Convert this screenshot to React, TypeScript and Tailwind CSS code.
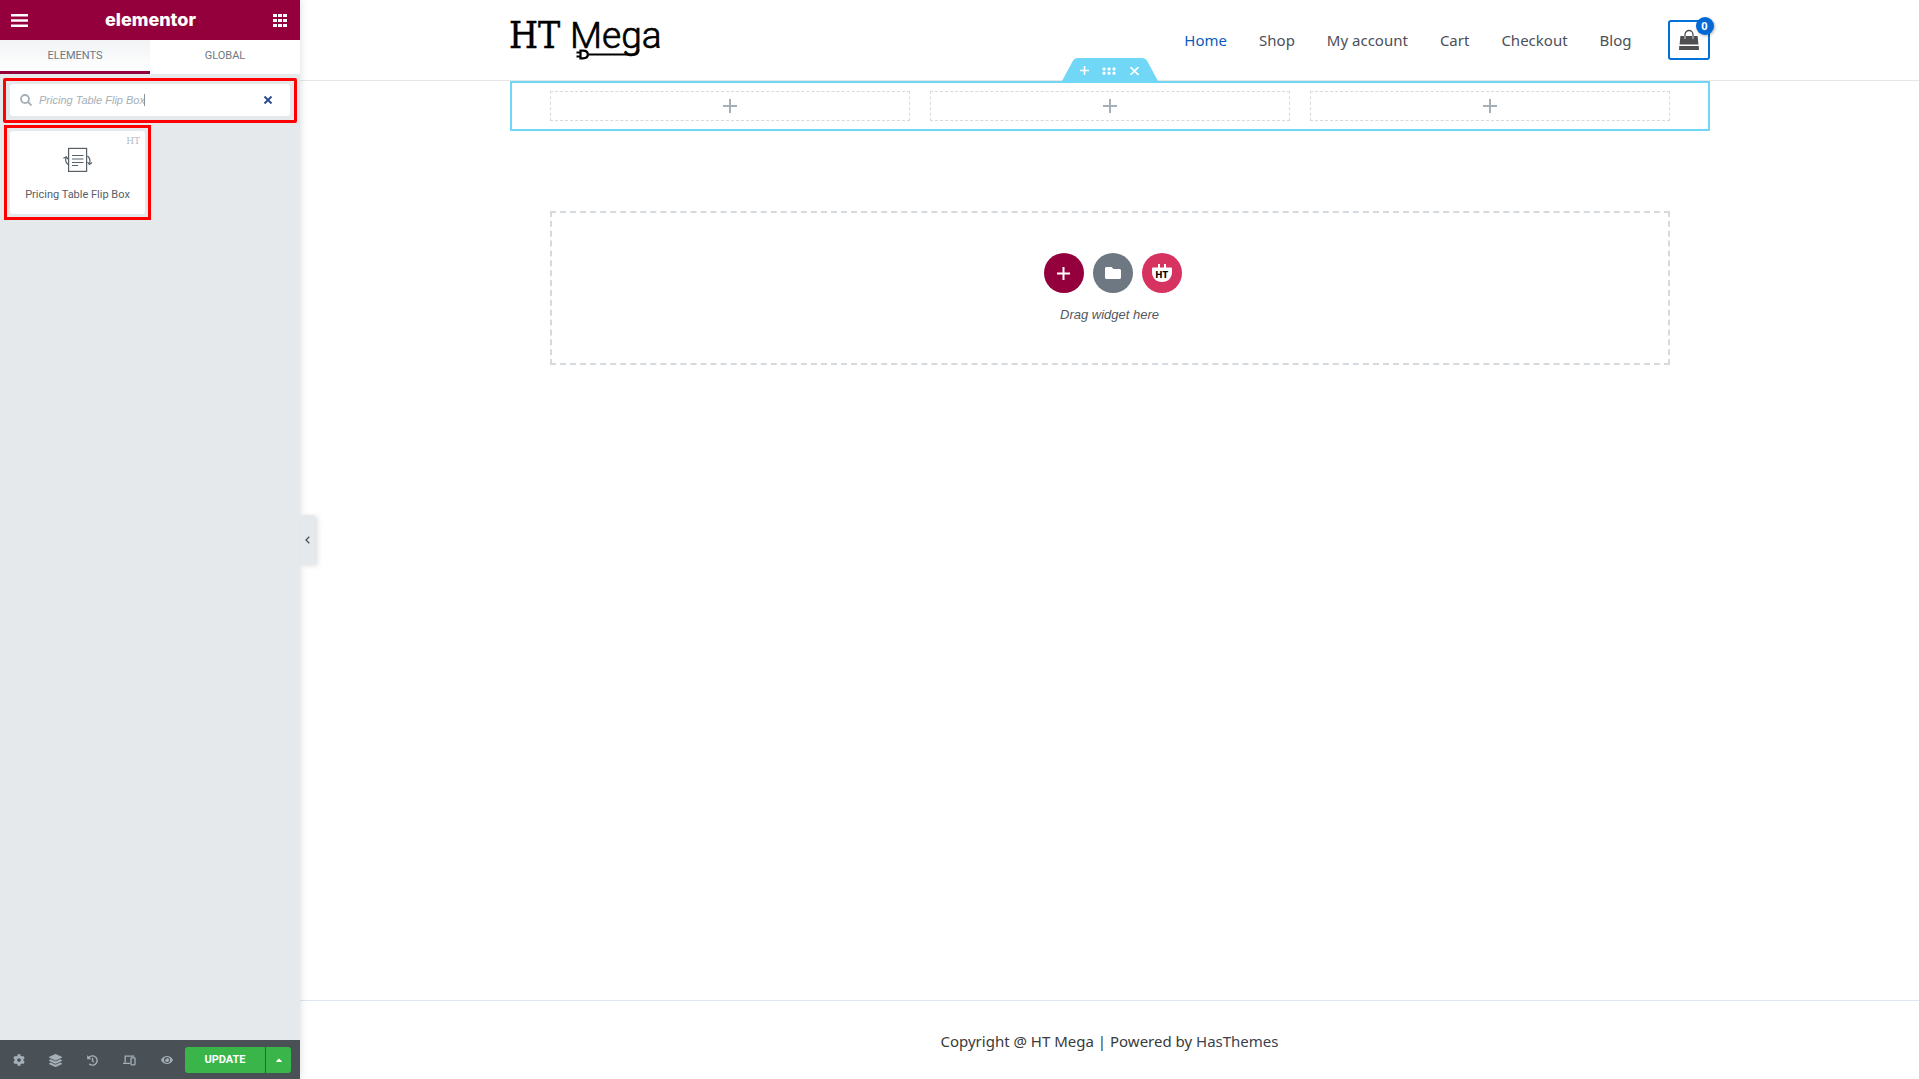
import { useState } from 'react'
import { FaCog, FaLayerGroup, FaHistory, FaEye, FaCaretUp, FaFolder } from 'react-icons/fa'

const NAV_ITEMS = ['Home', 'Shop', 'My account', 'Cart', 'Checkout', 'Blog']

const COLUMNS = ['first', 'second', 'third']

const FOOTER_TOOLS = [
  { label: 'Settings', icon: <FaCog size={12} /> },
  { label: 'Navigator', icon: <FaLayerGroup size={13} /> },
  { label: 'History', icon: <FaHistory size={11} /> },
  { label: 'Responsive mode', icon: <DevicesIcon /> },
  { label: 'Preview changes', icon: <FaEye size={12} /> },
]

function DevicesIcon() {
  return (
    <svg width="13" height="11" viewBox="0 0 13 11" fill="none" stroke="currentColor" strokeWidth="1.3">
      <path d="M2.2 7.5V1.2h9.2M0 8.4h7" />
      <rect x="8" y="2.8" width="4" height="7" rx="0.5" />
    </svg>
  )
}

function GridIcon() {
  return (
    <svg width="14" height="13" viewBox="0 0 14 13" fill="currentColor">
      {[0, 5, 10].map(y => [0, 5, 10].map(x => <rect key={`${x}-${y}`} x={x} y={y} width="4" height="3" />))}
    </svg>
  )
}

function PlusIcon({ size, strokeWidth = 2 }: { size: number; strokeWidth?: number }) {
  return (
    <svg width={size} height={size} viewBox={`0 0 ${size} ${size}`} stroke="currentColor" strokeWidth={strokeWidth}>
      <path d={`M${size / 2} 0V${size}M0 ${size / 2}H${size}`} />
    </svg>
  )
}

function FlipBoxIcon() {
  return (
    <svg width="30" height="26" viewBox="-1 0 30 26" fill="none" stroke="currentColor" strokeWidth="1.2">
      <rect x="4.6" y="1.4" width="18" height="23" />
      <path d="M8 8.500h11.500M8 12h11.500M8 15.500h11.500M8 18.500h6" />
      <path d="M4 17.500C1.600 15.500 1.200 12.500 2.200 10M-0.600 11.200L2.300 9.800l1.700 2.400" />
      <path d="M23.400 9c2.400 1.800 3 4.800 2.200 7.500M28 15.500l-2.600 2-1.800-2.400" />
    </svg>
  )
}

function BagIcon() {
  return (
    <svg width="22" height="22" viewBox="0 0 22 22" fill="#4f4f51">
      <path d="M7 9V5.500a4 4 0 0 1 8 0V9" fill="none" stroke="#4f4f51" strokeWidth="1.300" />
      <path d="M2.400 7h17.200l.8 8.500H1.600z" />
      <path d="M7 10V7M15 10V7" stroke="#fff" strokeWidth="0.800" />
      <path d="M1.200 17h19.600l.2 4H1z" />
    </svg>
  )
}

function PlugIcon() {
  return (
    <svg width="22" height="20" viewBox="0 0 22 20">
      <path d="M8 5V1M14 5V1" stroke="#fff" strokeWidth="2" />
      <path d="M2 4.500h18a1 1 0 0 1 1 1V9c0 6-4 10-10 10S1 15 1 9V5.500a1 1 0 0 1 1-1z" fill="#fff" />
      <text x="11" y="15" textAnchor="middle" fontSize="9" className="font-[Inter,sans-serif] font-extrabold">HT</text>
    </svg>
  )
}

function Logo() {
  return (
    <svg width="154" height="58" viewBox="0 -6 154 58" role="img" aria-label="HT Mega" className="overflow-visible">
      <text x="-1" y="31" fontSize="37" stroke="#000" strokeWidth="0.400" className="font-['DejaVu_Serif_Condensed','DejaVu_Serif',serif]">HT</text>
      <text x="60" y="31" fontSize="37" stroke="#000" strokeWidth="0.700" className="font-[Roboto,sans-serif] font-light">Mega</text>
      <path d="M78 37.500h46q4.500 0 4.500-5" fill="none" stroke="#000" strokeWidth="2.200" />
      <path d="M70.500 33.700h2.500c3.300 0 4.800 1.800 4.800 3.800s-1.500 3.800-4.800 3.800h-2.500z" fill="#fff" stroke="#000" strokeWidth="2.200" />
      <path d="M66.500 35.500h4M66.500 39.500h4" stroke="#000" strokeWidth="1.800" />
    </svg>
  )
}

function Panel() {
  const [query, setQuery] = useState('Pricing Table Flip Box')
  const [tab, setTab] = useState('Elements')

  return (
    <aside className="relative z-10 flex w-[300px] shrink-0 flex-col bg-[#e6e9ec] font-[Roboto,sans-serif] shadow-[0_0_8px_rgba(0,0,0,0.15)]">
      <header className="flex h-10 items-center justify-between bg-[#93003c] pr-[13px] pl-[11px] text-white">
        <button type="button" aria-label="Menu">
          <svg width="17" height="13" viewBox="0 0 17 13" fill="currentColor">
            <path d="M0 0h17v2.500H0zM0 5.200h17v2.500H0zM0 10.400h17v2.500H0z" />
          </svg>
        </button>
        <span className="font-[Inter,sans-serif] text-[18px] leading-5 font-extrabold">elementor</span>
        <button type="button" aria-label="Widgets panel"><GridIcon /></button>
      </header>

      <div className="flex h-[34px]">
        {['Elements', 'Global'].map(t => (
          <button
            key={t}
            type="button"
            onClick={() => setTab(t)}
            className={`flex-1 border-b-3 pt-[2px] text-[11px] text-[#6d7882] uppercase ${
              tab === t ? 'border-[#93003c] bg-linear-to-b from-[#f1f3f5] to-white' : 'border-white bg-white'
            }`}
          >
            {t}
          </button>
        ))}
      </div>

      <div className="mx-[3px] mt-1 rounded-[2px] border-3 border-[#ff0000] px-1 pt-[3px] pb-1">
        <div className="relative flex h-8 items-center rounded-[3px] bg-white pr-4 pl-[10px]">
          <svg width="12" height="12" viewBox="0 0 12 12" fill="none" stroke="#a4afb7" strokeWidth="1.800">
            <circle cx="5" cy="5" r="4" />
            <path d="M8 8l3.500 3.500" />
          </svg>
          <input
            aria-label="Search widget"
            value={query}
            onChange={e => setQuery(e.target.value)}
            className="min-w-0 flex-1 bg-transparent pl-[7px] font-['Liberation_Sans',sans-serif] text-[11px] text-[#a4afb7] italic outline-none"
          />
          <span className="absolute top-[10px] left-[134px] h-3 w-px bg-[#8a949c]" />
          <button type="button" aria-label="Clear search" onClick={() => setQuery('')} className="text-[#2b4b8f]">
            <svg width="12" height="8" viewBox="0 0 12 8" stroke="currentColor" strokeWidth="2">
              <path d="M2.500 0.500l7 7M9.500 0.500l-7 7" />
            </svg>
          </button>
        </div>
      </div>

      <div className="mt-[2px] ml-1 w-[147px] border-3 border-[#ff0000] p-[3px]">
        <button type="button" className="relative flex h-[83px] w-full flex-col items-center rounded-[3px] bg-white pt-4 text-[#556068]">
          <FlipBoxIcon />
          <span className="mt-[13px] text-[11px] leading-[18px] whitespace-nowrap">Pricing Table Flip Box</span>
          <span className="absolute top-1 right-[5px] font-['DejaVu_Serif_Condensed','DejaVu_Serif',serif] text-[10px] leading-3 text-[#b5bcc3]">HT</span>
        </button>
      </div>

      <footer className="mt-auto flex h-[39px] items-center bg-[#495157] pt-px pr-[9px]">
        <div className="flex flex-1">
          {FOOTER_TOOLS.map(tool => (
            <button key={tool.label} type="button" aria-label={tool.label} className="flex flex-1 items-center justify-center text-[#a4afb7]">
              {tool.icon}
            </button>
          ))}
        </div>
        <div className="flex h-[26px] gap-px text-white">
          <button type="button" className="w-20 rounded-l-[3px] bg-[#39b54a] text-[11px] font-bold">UPDATE</button>
          <button type="button" aria-label="Save options" className="flex w-[25px] items-center justify-center rounded-r-[3px] bg-[#39b54a]">
            <FaCaretUp size={10} />
          </button>
        </div>
      </footer>

      <button
        type="button"
        aria-label="Hide panel"
        className="absolute top-1/2 left-full flex h-[50px] w-[15px] -translate-y-1/2 items-center justify-center rounded-r-[2px] bg-[#e6e9ec] text-[#495157] shadow-[3px_1px_5px_rgba(0,0,0,0.12)]"
      >
        <svg width="5" height="8" viewBox="0 0 5 8" fill="none" stroke="currentColor" strokeWidth="1.300">
          <path d="M4.300 0.700L1 4l3.300 3.300" />
        </svg>
      </button>
    </aside>
  )
}

function SiteHeader() {
  return (
    <header className="border-b border-[#e6e6e6]">
      <div className="mx-auto flex h-20 max-w-[1200px] items-center justify-between">
        <a href="#home"><Logo /></a>
        <div className="flex items-center gap-9">
          <nav className="flex gap-8 text-[15px] text-[#4b4f58]">
            {NAV_ITEMS.map((item, i) => (
              <a key={item} href="#" className={i === 0 ? 'text-[#0b5cba]' : ''}>{item}</a>
            ))}
          </nav>
          <a href="#cart" aria-label="Cart" className="relative flex h-10 w-[42px] items-center justify-center rounded-[3px] border-2 border-[#0170d9]">
            <BagIcon />
            <span className="absolute -top-[5px] -right-[6px] flex size-[18px] items-center justify-center rounded-full bg-[#0168d6] text-[11px] font-bold text-white shadow-[1px_1px_3px_rgba(0,0,0,0.3)]">0</span>
          </a>
        </div>
      </div>
    </header>
  )
}

function SectionHandle() {
  return (
    <div className="absolute bottom-full left-1/2 h-[25px] w-24 -translate-x-1/2 text-white">
      <svg width="96" height="25" viewBox="0 0 96 25" fill="#71d7f7" className="absolute inset-0">
        <path d="M0 23L10.800 3Q12.500 0 16 0H80Q83.500 0 85.200 3L96 23v2H0z" />
      </svg>
      <div className="relative flex h-full items-center justify-center gap-[13px]">
        <button type="button" aria-label="Add section"><PlusIcon size={9} strokeWidth={1.6} /></button>
        <button type="button" aria-label="Edit section">
          <svg width="15" height="8" viewBox="0 0 15 8" fill="currentColor">
            {[0, 5, 10].map(x => (
              <g key={x}>
                <rect x={x + 0.5} y="0.500" width="3" height="3" rx="1" />
                <rect x={x + 0.5} y="4.800" width="3" height="3" rx="1" />
              </g>
            ))}
          </svg>
        </button>
        <button type="button" aria-label="Delete section">
          <svg width="9" height="8" viewBox="0 0 9 8" stroke="currentColor" strokeWidth="1.600">
            <path d="M0.500 0l8 8M8.500 0l-8 8" />
          </svg>
        </button>
      </div>
    </div>
  )
}

function Preview() {
  return (
    <div className="flex min-w-0 flex-1 flex-col font-['Noto_Sans',sans-serif]">
      <SiteHeader />

      <main className="flex-1">
        <section className="relative mx-auto max-w-[1200px] border-2 border-[#71d7f7] px-7 py-2">
          <SectionHandle />
          <div className="flex">
            {COLUMNS.map(col => (
              <div key={col} className="flex-1 px-[10px]">
                <button type="button" aria-label={`Add widget to ${col} column`} className="flex h-[30px] w-full items-center justify-center border border-dashed border-[#d5dadf] text-[#a4afb7]">
                  <PlusIcon size={14} />
                </button>
              </div>
            ))}
          </div>
        </section>

        <div className="mx-auto mt-20 flex h-[154px] max-w-[1120px] flex-col items-center border-2 border-dashed border-[#d5dadf] pt-10">
          <div className="flex gap-[9px] pl-[6px] text-white">
            <button type="button" aria-label="Add new section" className="flex size-10 items-center justify-center rounded-full bg-[#93003c]">
              <PlusIcon size={13} />
            </button>
            <button type="button" aria-label="Add template" className="flex size-10 items-center justify-center rounded-full bg-[#6d7882]">
              <FaFolder size={16} />
            </button>
            <button type="button" aria-label="HT Mega library" className="flex size-10 items-center justify-center rounded-full bg-[#d63361]">
              <PlugIcon />
            </button>
          </div>
          <p className="mt-3 font-['Liberation_Sans',sans-serif] text-[13px] leading-5 text-[#54595f] italic">Drag widget here</p>
        </div>
      </main>

      <footer className="flex h-[79px] items-center justify-center border-t border-[#dfe6ee] pt-[2px] text-[15px] text-[#3a3a3a]">
        <p>Copyright @ HT Mega | Powered by <a href="#hasthemes" className="text-[#3a4250]">HasThemes</a></p>
      </footer>
    </div>
  )
}

export default function App() {
  return (
    <div className="flex min-h-screen bg-white">
      <Panel />
      <Preview />
    </div>
  )
}
